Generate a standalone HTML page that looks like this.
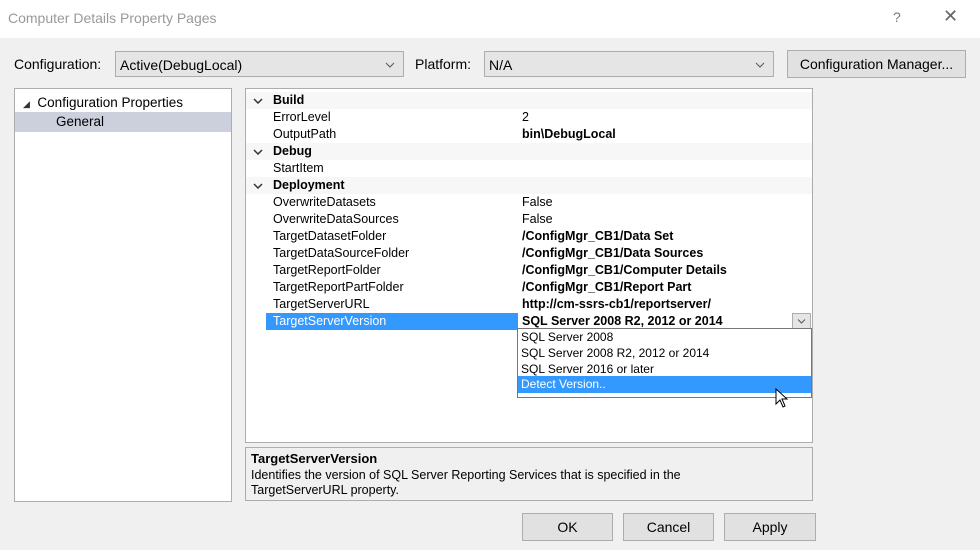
<!DOCTYPE html>
<html><head><style>
body{margin:0;width:980px;height:550px;background:#f0f0f0;font-family:"Liberation Sans",sans-serif;font-size:13px;color:#000;position:relative;overflow:hidden}
.a{position:absolute}
.title{left:0;top:0;width:980px;height:38px;background:#fff;}
.combo{background:#e5e5e5;border:1px solid #adadad;height:26px;line-height:26px;padding-left:4px;box-sizing:border-box;font-size:14px}
.combo svg{position:absolute;right:8px;top:10px}
.btn{background:#e1e1e1;border:1px solid #adadad;box-sizing:border-box;text-align:center;font-size:14px;line-height:26px;height:28px}
.row{position:absolute;left:0;width:566px;height:17px;line-height:17px;font-size:12.5px}
.row .n{position:absolute;left:27px}
.row .v{position:absolute;left:276px;font-weight:bold}
.cat{background:#f7f7f7;font-weight:bold}
.cat svg{position:absolute;left:7px;top:6px}
</style></head><body>
<div class="a title"></div>
<div class="a" style="left:8px;top:10px;color:#999;font-size:14px">Computer Details Property Pages</div>
<div class="a" style="left:893px;top:9px;color:#777;font-size:14px">?</div>
<div class="a" style="left:943px;top:6px;color:#666;font-size:18px">✕</div>
<div class="a" style="left:14px;top:56px;font-size:14px">Configuration:</div>
<div class="a combo" style="left:115px;top:51px;width:289px">Active(DebugLocal)<svg width="10" height="6"><path d="M1 1L5 5L9 1" fill="none" stroke="#555"/></svg></div>
<div class="a" style="left:415px;top:56px;font-size:14px">Platform:</div>
<div class="a combo" style="left:484px;top:51px;width:290px">N/A<svg width="10" height="6"><path d="M1 1L5 5L9 1" fill="none" stroke="#555"/></svg></div>
<div class="a btn" style="left:787px;top:50px;width:179px">Configuration Manager...</div>
<div class="a" style="left:14px;top:88px;width:218px;height:414px;background:#fff;border:1px solid #adadad;box-sizing:border-box">
<div class="a" style="left:8px;top:6px;font-size:13.5px"><span style="font-size:9px;color:#333">◢</span>&nbsp; Configuration Properties</div>
<div class="a" style="left:0;top:23px;width:216px;height:20px;background:#ccd0dc"></div>
<div class="a" style="left:41px;top:25px;font-size:13.5px">General</div>
</div>
<div class="a" style="left:245px;top:88px;width:568px;height:355px;background:#fff;border:1px solid #adadad;box-sizing:border-box">
<div class="row cat" style="top:3px"><svg width="10" height="6"><path d="M1 1L5 5L9 1" fill="none" stroke="#333" stroke-width="1.5"/></svg><span class="n">Build</span></div>
<div class="row" style="top:20px"><span class="n">ErrorLevel</span><span class="v" style="font-weight:normal">2</span></div>
<div class="row" style="top:37px"><span class="n">OutputPath</span><span class="v">bin\DebugLocal</span></div>
<div class="row cat" style="top:54px"><svg width="10" height="6"><path d="M1 1L5 5L9 1" fill="none" stroke="#333" stroke-width="1.5"/></svg><span class="n">Debug</span></div>
<div class="row" style="top:71px"><span class="n">StartItem</span></div>
<div class="row cat" style="top:88px"><svg width="10" height="6"><path d="M1 1L5 5L9 1" fill="none" stroke="#333" stroke-width="1.5"/></svg><span class="n">Deployment</span></div>
<div class="row" style="top:105px"><span class="n">OverwriteDatasets</span><span class="v" style="font-weight:normal">False</span></div>
<div class="row" style="top:122px"><span class="n">OverwriteDataSources</span><span class="v" style="font-weight:normal">False</span></div>
<div class="row" style="top:139px"><span class="n">TargetDatasetFolder</span><span class="v">/ConfigMgr_CB1/Data Set</span></div>
<div class="row" style="top:156px"><span class="n">TargetDataSourceFolder</span><span class="v">/ConfigMgr_CB1/Data Sources</span></div>
<div class="row" style="top:173px"><span class="n">TargetReportFolder</span><span class="v">/ConfigMgr_CB1/Computer Details</span></div>
<div class="row" style="top:190px"><span class="n">TargetReportPartFolder</span><span class="v">/ConfigMgr_CB1/Report Part</span></div>
<div class="row" style="top:207px"><span class="n">TargetServerURL</span><span class="v">http://cm-ssrs-cb1/reportserver/</span></div>
<div class="row" style="top:224px"><span class="a" style="left:20px;width:252px;height:17px;background:#3399ff"></span><span class="n" style="color:#fff">TargetServerVersion</span><span class="v">SQL Server 2008 R2, 2012 or 2014</span>
<span class="a" style="left:546px;top:0;width:17px;height:15px;border:1px solid #adadad;background:#e5e5e5"><svg style="position:absolute;left:4px;top:5px" width="9" height="5"><path d="M1 0.5L4.5 4L8 0.5" fill="none" stroke="#555"/></svg></span></div>
</div>
<div class="a" style="left:517px;top:328px;width:295px;height:70px;background:#fff;border:1px solid #777;box-sizing:border-box;font-size:12px">
<div class="a" style="left:3px;top:1px">SQL Server 2008</div>
<div class="a" style="left:3px;top:17px">SQL Server 2008 R2, 2012 or 2014</div>
<div class="a" style="left:3px;top:33px">SQL Server 2016 or later</div>
<div class="a" style="left:0;top:47px;width:293px;height:17px;background:#3399ff;color:#fff;line-height:17px;text-indent:3px">Detect Version..</div>
</div>
<svg class="a" style="left:775px;top:388px" width="14" height="22" viewBox="0 0 14 22"><path d="M1 1 L1 16 L5 12 L8 19 L10 18 L7 11 L12 11 Z" fill="#fff" stroke="#000" stroke-width="1"/></svg>
<div class="a" style="left:245px;top:447px;width:568px;height:54px;border:1px solid #adadad;box-sizing:border-box;font-size:12.5px">
<div class="a" style="left:5px;top:3px;font-weight:bold;font-size:13px">TargetServerVersion</div>
<div class="a" style="left:5px;top:20px;line-height:15px;width:470px">Identifies the version of SQL Server Reporting Services that is specified in the TargetServerURL property.</div>
</div>
<div class="a btn" style="left:522px;top:513px;width:91px">OK</div>
<div class="a btn" style="left:623px;top:513px;width:91px">Cancel</div>
<div class="a btn" style="left:724px;top:513px;width:92px">Apply</div>
</body></html>
